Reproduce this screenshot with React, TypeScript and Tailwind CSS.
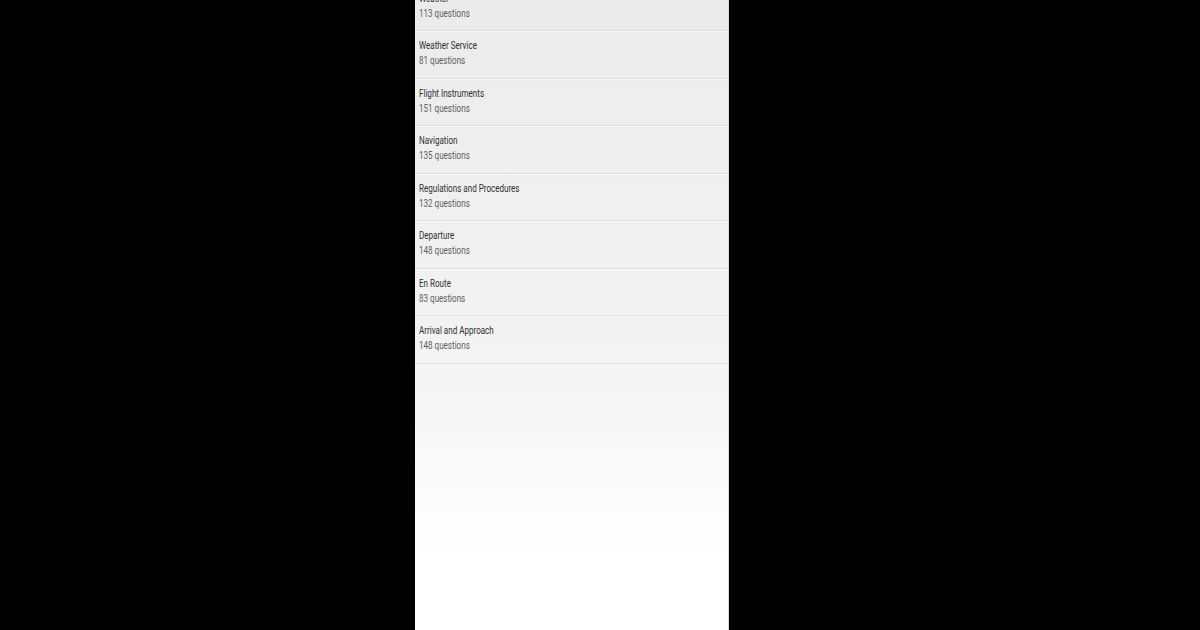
import React from "react";

const items = [
  { title: "Weather", count: 113 },
  { title: "Weather Service", count: 81 },
  { title: "Flight Instruments", count: 151 },
  { title: "Navigation", count: 135 },
  { title: "Regulations and Procedures", count: 132 },
  { title: "Departure", count: 148 },
  { title: "En Route", count: 83 },
  { title: "Arrival and Approach", count: 148 },
];

export default function App() {
  return (
    <div className="w-[1200px] h-[630px] bg-black flex overflow-hidden" style={{ fontFamily: "Roboto, 'Liberation Sans', sans-serif" }}>
      <div className="ml-[415px] w-[314px] h-full bg-[linear-gradient(to_bottom,#ebebeb_0%,#f3f3f3_55%,#ffffff_90%)] border-r border-[#d8d8d8] overflow-hidden">
        <div className="mt-[-16.5px] flex flex-col">
          {items.map((it) => (
            <div key={it.title} className="h-[47.5px] border-b border-[#dedede] shadow-[0_1px_0_#f8f8f8] flex flex-col justify-center pl-1 gap-[2px] pb-[2px]">
              <span className="inline-block origin-left scale-x-[0.7] text-[11.5px] leading-[13px] text-[#303030] whitespace-nowrap">{it.title}</span>
              <span className="inline-block origin-left scale-x-[0.7] text-[11.5px] leading-[13px] text-[#5e5e5e] whitespace-nowrap">{it.count} questions</span>
            </div>
          ))}
        </div>
      </div>
    </div>
  );
}
